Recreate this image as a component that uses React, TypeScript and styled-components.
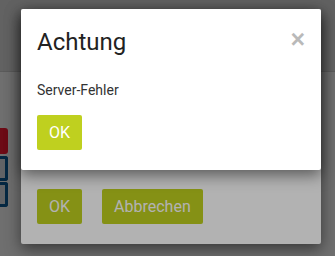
import { createGlobalStyle, styled } from "styled-components"

const GlobalStyle = createGlobalStyle`
    html, body {
        margin: 0;
        padding: 0;
        width: 335px;
        height: 256px;
        overflow: hidden;
        font-family: Roboto, "Liberation Sans", sans-serif;
    }
`

const Page = styled.div`
    position: relative;
    width: 335px;
    height: 256px;
    background: #e4e4e4;
    overflow: hidden;
`

const PageHeader = styled.div`
    height: 71px;
    background: #cbcbcb;
    border-bottom: 1px solid #bcbcbc;
`

const SideTools = styled.div`
    display: flex;
    flex-direction: column;
    gap: 1px;
    width: 8px;
    padding-top: 56px;
`

const SideBlock = styled.div<{ $variant: "red" | "blue" }>`
    box-sizing: border-box;
    height: ${ p => p.$variant === "red" ? "26px" : "25px" };
    margin-bottom: ${ p => p.$variant === "red" ? "1px" : "0" };
    background: ${ p => p.$variant === "red" ? "#e0172f" : "#c9cdd1" };
    border: ${ p => p.$variant === "red" ? "none" : "3px solid #0b5288" };
    border-left: none;
    border-radius: 0 3px 3px 0;
`

const Overlay = styled.div`
    position: absolute;
    inset: 0;
    background: rgba(0, 0, 0, 0.3);
    display: flex;
    align-items: flex-start;
    padding: 9px 0 0 21px;
`

const Dialog = styled.div<{ $height?: string }>`
    box-sizing: border-box;
    width: 300px;
    height: ${ p => p.$height ?? "auto" };
    background: #fff;
    border-radius: 2px;
    box-shadow: 0 5px 15px rgba(0, 0, 0, 0.5);
    padding: 0 16px 20px;
    display: flex;
    flex-direction: column;
`

const DialogHeader = styled.div`
    display: flex;
    justify-content: space-between;
    align-items: flex-start;
    padding-top: 20px;
`

const Title = styled.h4`
    margin: 0;
    font-size: 24px;
    line-height: 26px;
    font-weight: 400;
    color: #222;
`

const CloseButton = styled.button`
    border: none;
    background: none;
    padding: 0;
    margin: -1px 0 0 0;
    font-family: "Liberation Sans", Arial, sans-serif;
    font-size: 25px;
    line-height: 22px;
    font-weight: 700;
    color: #000;
    opacity: 0.27;
    cursor: pointer;
`

const Message = styled.p`
    margin: 25px 0 15px;
    font-size: 14px;
    line-height: 20px;
    color: #333;
`

const ButtonRow = styled.div`
    display: flex;
    gap: 20px;
    margin-top: auto;
`

const Button = styled.button`
    height: 35px;
    padding: 0 12px;
    border: none;
    border-radius: 2px;
    background: #bfd01f;
    color: #fff;
    font-family: Roboto, "Liberation Sans", sans-serif;
    font-size: 16px;
    cursor: pointer;
`

const App = () => {
    return (
        <Page>
            <GlobalStyle />
            <PageHeader />
            <SideTools>
                <SideBlock $variant="red" />
                <SideBlock $variant="blue" />
                <SideBlock $variant="blue" />
            </SideTools>
            <Overlay>
                <Dialog $height="235px">
                    <ButtonRow>
                        <Button>OK</Button>
                        <Button>Abbrechen</Button>
                    </ButtonRow>
                </Dialog>
            </Overlay>
            <Overlay>
                <Dialog>
                    <DialogHeader>
                        <Title>Achtung</Title>
                        <CloseButton>×</CloseButton>
                    </DialogHeader>
                    <Message>Server-Fehler</Message>
                    <ButtonRow>
                        <Button>OK</Button>
                    </ButtonRow>
                </Dialog>
            </Overlay>
        </Page>
    )
}

export default App
